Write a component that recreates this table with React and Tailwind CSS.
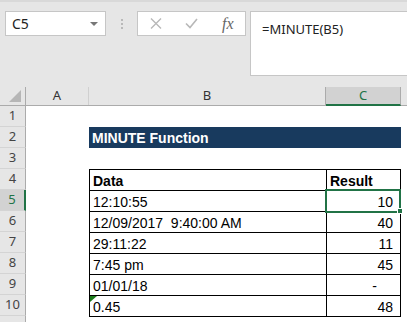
import React from "react";

const rows = [
  { n: 1 },
  { n: 2, title: true },
  { n: 3 },
  { n: 4, head: true, b: "Data", c: "Result" },
  { n: 5, b: "12:10:55", c: "10" },
  { n: 6, b: "12/09/2017\u00a0\u00a09:40:00 AM", c: "40" },
  { n: 7, b: "29:11:22", c: "11" },
  { n: 8, b: "7:45 pm", c: "45" },
  { n: 9, b: "01/01/18", c: "-", dash: true },
  { n: 10, b: "0.45", c: "48", flag: true },
  { n: 11, after: true },
];

const RowHead = ({ n, active, hideNum }) => (
  <div
    className={`w-[26px] shrink-0 h-full flex items-center justify-center text-[13px] border-b border-[#d4d4d4] ${
      active
        ? "bg-[#d2d2d2] text-[#217346] border-r-2 border-r-[#217346]"
        : "bg-[#e6e6e6] text-[#444] border-r border-r-[#ababab]"
    }`}
    style={{ fontFamily: "'Noto Sans', sans-serif" }}
  >
    {hideNum ? null : n}
  </div>
);

const SheetRow = ({ row }) => {
  const inTable = row.b !== undefined;
  return (
    <div className="flex h-[21px]">
      <RowHead n={row.n} active={row.n === 5} hideNum={row.after} />
      <div className="w-[63px] shrink-0" />
      {row.title ? (
        <div className="w-[312px] shrink-0 bg-[#183a5e] flex items-end pl-[3px] pb-[2px]">
          <span className="text-white font-bold text-[14px] leading-[16px]">MINUTE Function</span>
        </div>
      ) : (
        <>
          <div
            className={`relative w-[237px] shrink-0 flex items-end pl-[3px] pb-[1px] ${
              inTable ? "border-l border-t border-black" : ""
            } ${row.after ? "border-t border-black" : ""}`}
          >
            {row.flag && (
              <svg className="absolute left-0 top-0" width="7" height="6" viewBox="0 0 7 6">
                <polygon points="0,0 7,0 0,6" fill="#1a7a1a" />
              </svg>
            )}
            <span className={`text-[14px] leading-[16px] text-black whitespace-pre ${row.head ? "font-bold" : ""}`}>
              {row.b}
            </span>
          </div>
          <div
            className={`w-[75px] shrink-0 flex items-end pb-[1px] ${
              inTable ? "border-l border-r border-t border-black" : ""
            } ${row.after ? "border-t border-black" : ""} ${
              row.head ? "justify-start pl-[3px]" : row.dash ? "justify-end pr-[23px]" : "justify-end pr-[7px]"
            }`}
          >
            <span className={`text-[14px] leading-[16px] text-black ${row.head ? "font-bold" : ""}`}>{row.c}</span>
          </div>
        </>
      )}
      <div className="flex-1" />
    </div>
  );
};

export default function App() {
  return (
    <div
      className="relative w-[407px] h-[322px] overflow-hidden bg-white"
      style={{ fontFamily: "'Liberation Sans', Arial, sans-serif" }}
    >
      {/* Formula bar */}
      <div className="h-[87px] bg-[#e6e6e6] border-t-2 border-[#d9d9d9] flex items-start pt-[9px] pl-[5px]">
        <div className="w-[101px] h-[25px] shrink-0 bg-white border border-[#c6c6c6] flex items-center justify-between pl-[6px] pr-[7px]">
          <span className="text-[14px] text-[#222]" style={{ fontFamily: "'Noto Sans', sans-serif" }}>
            C5
          </span>
          <svg width="8" height="4" viewBox="0 0 8 4">
            <polygon points="0,0 8,0 4,4" fill="#777" />
          </svg>
        </div>
        <div className="w-[31px] h-[25px] shrink-0 flex flex-col items-center justify-center gap-[2px]">
          <div className="w-[2px] h-[2px] bg-[#b9b9b9]" />
          <div className="w-[2px] h-[2px] bg-[#b9b9b9]" />
          <div className="w-[2px] h-[2px] bg-[#b9b9b9]" />
        </div>
        <div className="w-[109px] h-[25px] shrink-0 bg-white border border-[#c6c6c6] flex items-center pl-[12px]">
          <svg width="12" height="11" viewBox="0 0 12 11">
            <path d="M1 0.5 L11 10.5 M11 0.5 L1 10.5" stroke="#b8b8b8" strokeWidth="1.4" fill="none" />
          </svg>
          <svg className="ml-[23px]" width="13" height="11" viewBox="0 0 13 11">
            <path d="M1 5.5 L5 9.5 L12 1" stroke="#b8b8b8" strokeWidth="1.6" fill="none" />
          </svg>
          <span
            className="ml-[24px] italic text-[16px] text-[#666] leading-none"
            style={{ fontFamily: "'Liberation Serif', serif" }}
          >
            fx
          </span>
        </div>
        <div className="ml-[4px] flex-1 h-[65px] bg-white border border-r-0 border-[#c6c6c6] pl-[11px] pt-[5px]">
          <span className="text-[13px] text-[#222]" style={{ fontFamily: "'Noto Sans', sans-serif" }}>
            =MINUTE(B5)
          </span>
        </div>
      </div>

      {/* Column headers */}
      <div
        className="flex h-[19px] bg-[#e6e6e6] border-b border-[#ababab] text-[13px] text-[#333]"
        style={{ fontFamily: "'Noto Sans', sans-serif" }}
      >
        <div className="w-[26px] shrink-0 border-r border-[#ababab] flex items-end justify-end pr-[4px] pb-[3px]">
          <svg width="12" height="12" viewBox="0 0 12 12">
            <polygon points="12,0 12,12 0,12" fill="#b6b6b6" />
          </svg>
        </div>
        <div className="w-[63px] shrink-0 border-r border-[#d0d0d0] flex items-center justify-center">A</div>
        <div className="w-[237px] shrink-0 border-r border-[#ababab] flex items-center justify-center">B</div>
        <div className="w-[75px] shrink-0 -mb-[1px] bg-[#d2d2d2] border-r border-[#ababab] border-b-2 border-b-[#217346] flex items-center justify-center text-[#217346]">
          C
        </div>
        <div className="flex-1" />
      </div>

      {/* Cells */}
      <div>
        {rows.map((r) => (
          <SheetRow key={r.n} row={r} />
        ))}
      </div>

      {/* Active cell selection */}
      <div className="absolute left-[325px] top-[189px] w-[76px] h-[24px] border-2 border-[#217346] pointer-events-none" />
      <div className="absolute left-[397px] top-[208px] w-[6px] h-[6px] bg-[#217346] border border-white" />
    </div>
  );
}
